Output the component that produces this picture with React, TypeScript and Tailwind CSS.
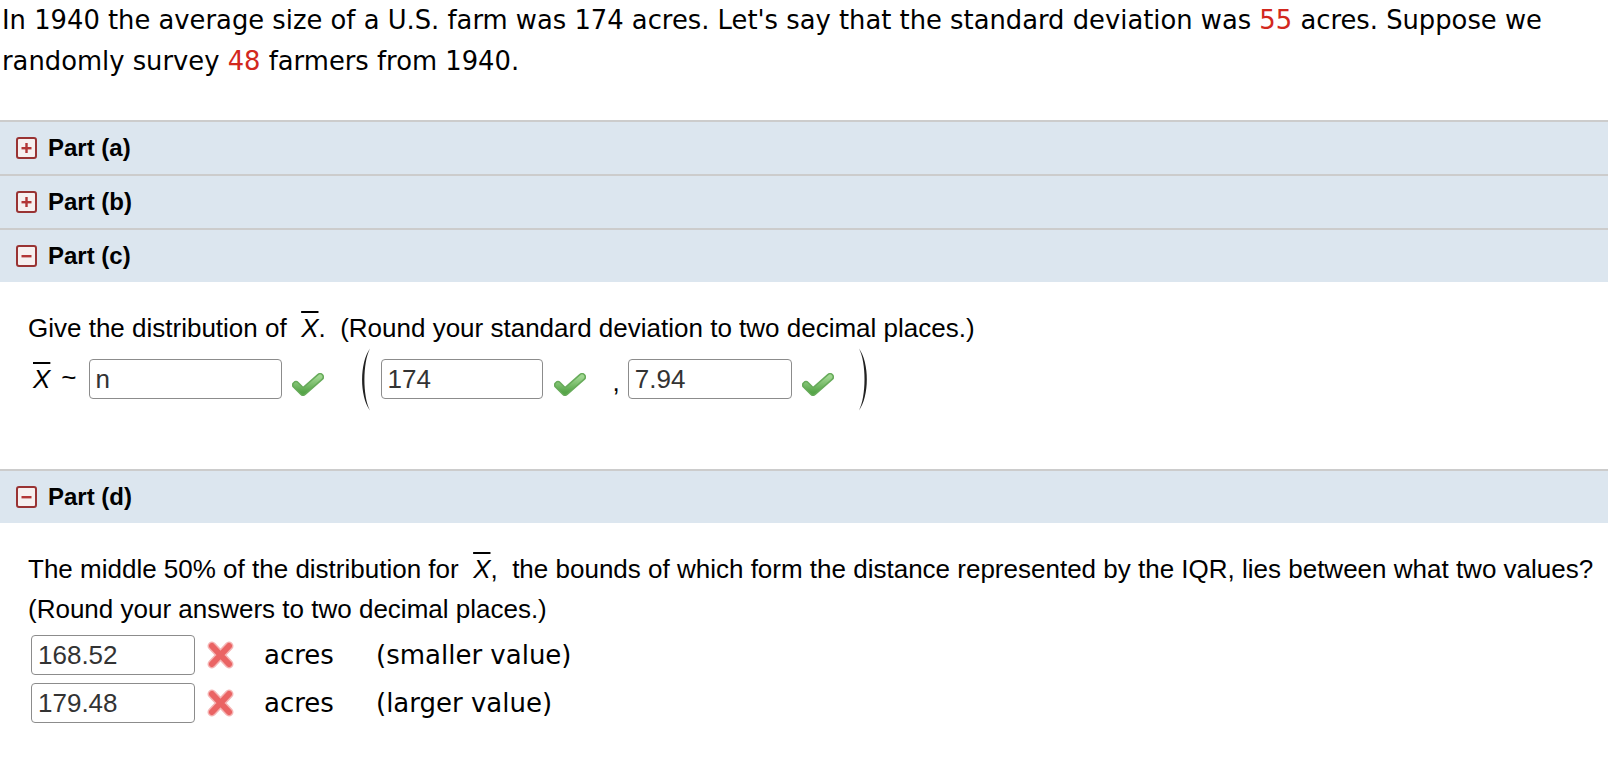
import type { ReactNode } from 'react'

const verdana = "font-['DejaVu_Sans','Verdana',sans-serif]"
const arial = "font-['Liberation_Sans','Arial',sans-serif]"

function ToggleBox({ open }: { open: boolean }) {
  return (
    <svg width="21" height="22" viewBox="0 0 21 22" className="shrink-0">
      <rect x="1" y="1" width="19" height="20" rx="2" fill="#f6f0f0" stroke="#993333" strokeWidth="2" />
      <rect x="5.5" y="10" width="10" height="2.4" fill="#b33636" />
      {!open && <rect x="9.3" y="6" width="2.4" height="10" fill="#b33636" />}
    </svg>
  )
}

function PartBar({ label, open }: { label: string; open: boolean }) {
  return (
    <div className="flex h-[54px] items-center gap-[11px] border-t-2 border-[#cccccc] bg-[#dce6ef] pl-4">
      <ToggleBox open={open} />
      <span className={`${arial} text-[24px] font-bold`}>{label}</span>
    </div>
  )
}

function Check() {
  return (
    <svg width="32" height="23" viewBox="0 0 32 23" className="mt-[10px] shrink-0">
      <defs>
        <linearGradient id="chk" x1="0" y1="0" x2="0" y2="1">
          <stop offset="0" stopColor="#9fd690" />
          <stop offset="1" stopColor="#56a548" />
        </linearGradient>
      </defs>
      <path d="M4 12 L11 19 L28 4" fill="none" stroke="#67ab5a" strokeWidth="8" strokeLinecap="round" strokeLinejoin="round" />
      <path d="M4 12 L11 19 L28 4" fill="none" stroke="url(#chk)" strokeWidth="5" strokeLinecap="round" strokeLinejoin="round" />
    </svg>
  )
}

function Cross() {
  return (
    <svg width="27" height="28" viewBox="0 0 27 28" className="shrink-0">
      <path d="M5 5 L22 23 M22 5 L5 23" stroke="#f5b5b5" strokeWidth="9" strokeLinecap="round" />
      <path d="M5 5 L22 23 M22 5 L5 23" stroke="#ea6464" strokeWidth="6" strokeLinecap="round" />
    </svg>
  )
}

function Paren({ right }: { right?: boolean }) {
  return (
    <svg width="12" height="63" viewBox="0 0 12 63" className={`shrink-0 ${right ? 'scale-x-[-1]' : ''}`}>
      <path d="M11 0.5 C0.5 15 0.5 48 11 62.5 C3.6 48 3.6 15 11 0.5 Z" fill="#222" />
    </svg>
  )
}

function Box({ value, w }: { value: string; w: string }) {
  return (
    <input
      readOnly
      value={value}
      className={`${arial} ${w} h-[40px] shrink-0 rounded-[4px] border border-[#8c8c8c] bg-white pl-[6px] text-[26px] text-[#333] outline-none`}
    />
  )
}

function Xbar({ children }: { children?: ReactNode }) {
  return (
    <span className="italic overline">
      X{children}
    </span>
  )
}

export default function App() {
  const red = 'text-[#d2281e]'

  return (
    <div className="min-h-screen bg-white text-black">
      <p className={`${verdana} pl-[2px] text-[25.8px] leading-[41px]`}>
        In 1940 the average size of a U.S. farm was 174 acres. Let's say that the standard deviation was{' '}
        <span className={red}>55</span> acres. Suppose we
        <br />
        randomly survey <span className={red}>48</span> farmers from 1940.
      </p>

      <div className="mt-[38px]">
        <PartBar label="Part (a)" open={false} />
        <PartBar label="Part (b)" open={false} />
        <PartBar label="Part (c)" open />

        <div className={`${arial} pb-[70px] pl-[28px] pt-[26px] text-[26px]`}>
          <p className="leading-[40px]">
            Give the distribution of&nbsp; <Xbar />.&nbsp; (Round your standard deviation to two decimal places.)
          </p>
          <div className="mt-[11px] flex h-[40px] items-center">
            <span className="ml-[5px] italic overline">X</span>
            <span className="ml-[11px] mt-[-4px]">~</span>
            <span className="ml-[12px] flex items-center">
              <Box value="n" w="w-[193px]" />
            </span>
            <span className="ml-[10px]"><Check /></span>
            <span className="ml-[35px]"><Paren /></span>
            <span className="ml-[10px]"><Box value="174" w="w-[162px]" /></span>
            <span className="ml-[11px]"><Check /></span>
            <span className="ml-[27px] mt-[6px]">,</span>
            <span className="ml-[8px]"><Box value="7.94" w="w-[164px]" /></span>
            <span className="ml-[10px]"><Check /></span>
            <span className="ml-[24px]"><Paren right /></span>
          </div>
        </div>

        <PartBar label="Part (d)" open />

        <div className={`${arial} pl-[28px] pt-[26px] text-[26px]`}>
          <p className="leading-[40px]">
            The middle 50% of the distribution for&nbsp; <Xbar />,&nbsp; the bounds of which form the distance represented
            by the IQR, lies between what two values? (Round your answers to two decimal places.)
          </p>
          <div className="mt-[6px] flex flex-col gap-[8px]">
            {[
              ['168.52', '(smaller value)'],
              ['179.48', '(larger value)'],
            ].map(([v, note]) => (
              <div key={v} className="flex h-[40px] items-center">
                <span className="ml-[3px]"><Box value={v} w="w-[164px]" /></span>
                <span className="ml-[12px]"><Cross /></span>
                <span className={`${verdana} ml-[30px] w-[112px]`}>acres</span>
                <span className={verdana}>{note}</span>
              </div>
            ))}
          </div>
        </div>
      </div>
    </div>
  )
}
